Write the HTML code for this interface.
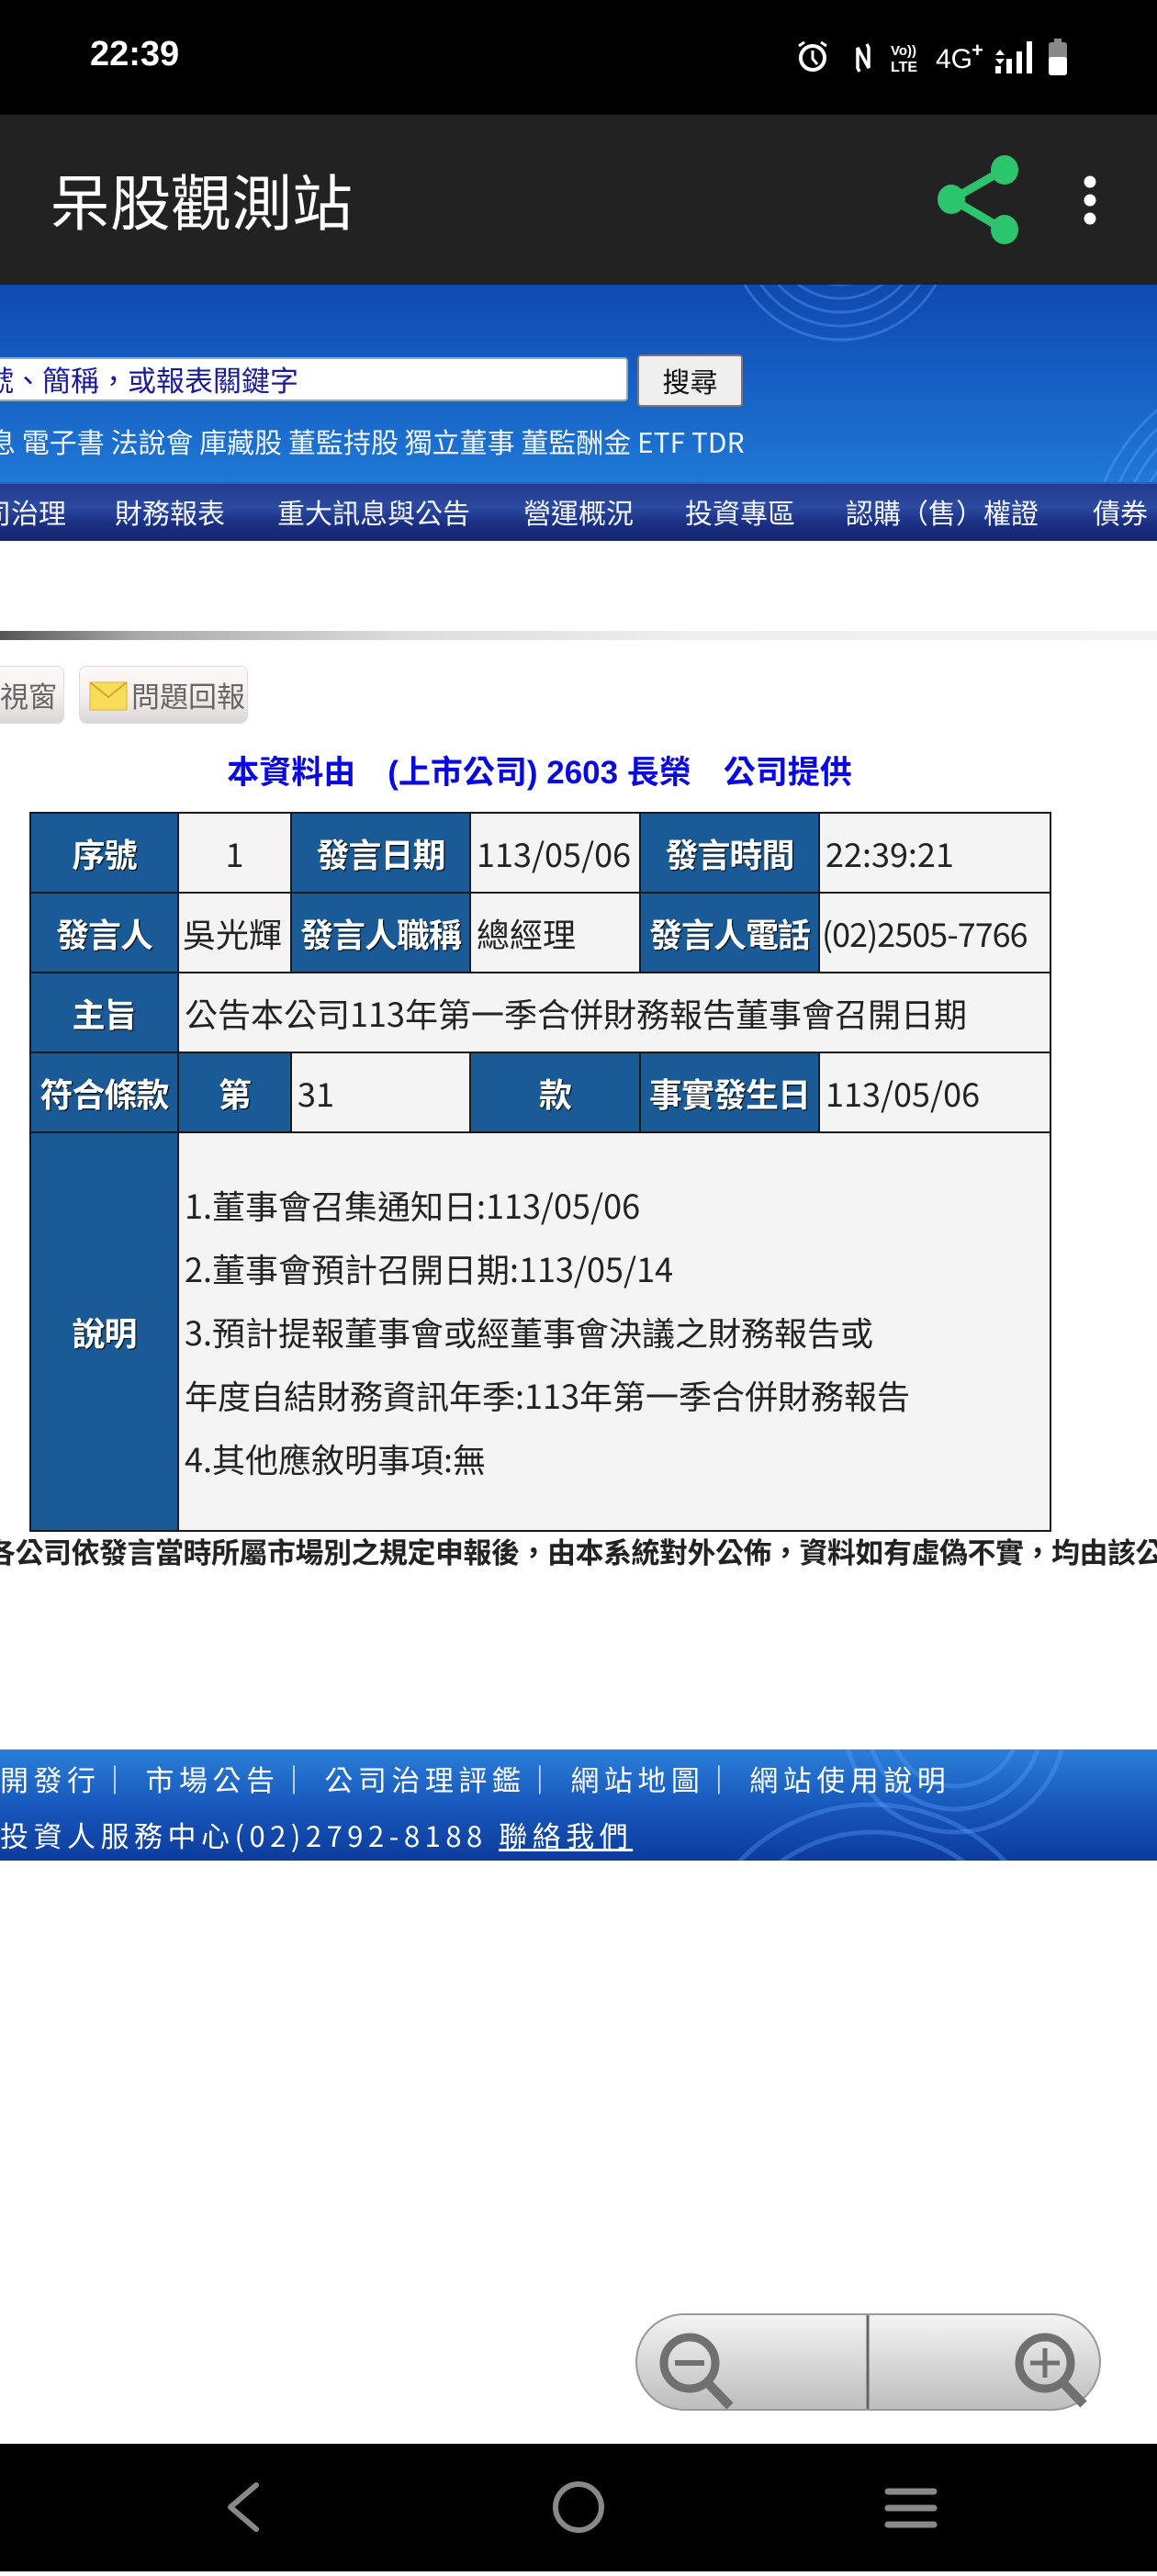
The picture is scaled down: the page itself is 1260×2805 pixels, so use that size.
<!DOCTYPE html>
<html><head><meta charset="utf-8">
<style>
*{margin:0;padding:0;box-sizing:border-box}
html,body{width:1260px;height:2800px;overflow:hidden;background:#fff;font-family:"Liberation Sans","Noto Sans CJK TC",sans-serif}
.abs{position:absolute;white-space:nowrap}
#status{position:absolute;left:0;top:0;width:1260px;height:125px;background:#000}
#appbar{position:absolute;left:0;top:125px;width:1260px;height:185px;background:#222}
#hdr{position:absolute;left:0;top:310px;width:1260px;height:215px;background:linear-gradient(180deg,#0f49b0 0%,#1660c4 50%,#1f78d6 100%);overflow:hidden}
#nav{position:absolute;left:0;top:525px;width:1260px;height:64px;background:linear-gradient(180deg,#233a8c 0%,#2b4aa0 40%,#1b2f82 70%,#15276e 100%);border-top:2px solid #3a5ab8;overflow:hidden}
#nav span{position:absolute;top:12px;color:#f2f4ff;font-size:30px;font-family:"Noto Sans CJK TC",sans-serif;line-height:36px;white-space:nowrap}
table{position:absolute;left:32px;top:884px;border-collapse:collapse;width:1111px;table-layout:fixed}
td{border:2px solid #1a1a1a;font-family:"Noto Sans CJK TC",sans-serif;font-size:36px;height:87px;padding:0 6px;white-space:nowrap;overflow:hidden}
td.h{background:#1a5a96;color:#fff;font-weight:bold;text-align:center;text-shadow:1px 1px 1px #000;padding:0;letter-spacing:-1px}
td.v{background:#f4f4f4;color:#222}
#foot{position:absolute;left:0;top:1905px;width:1260px;height:121px;background:linear-gradient(180deg,#2a7fd8 0%,#1858bd 50%,#0c3c9c 100%);overflow:hidden}
#foot div{position:absolute;color:#fff;font-size:31px;letter-spacing:5.5px;font-family:"Noto Sans CJK TC",sans-serif;white-space:nowrap;line-height:40px}
.btn{position:absolute;top:725px;height:63px;border:1px solid #ddd;border-radius:8px;background:linear-gradient(180deg,#fff8f8 0%,#f6efef 50%,#ddd6d6 100%);color:#666;font-size:31px;font-family:"Noto Sans CJK TC",sans-serif;line-height:61px;white-space:nowrap;overflow:hidden}
</style></head><body>
<div id="status">
  <div class="abs" style="left:98px;top:38px;color:#fff;font-size:38px;font-weight:bold;">22:39</div>
  <svg class="abs" style="left:860px;top:40px" width="310" height="48" viewBox="860 40 310 48">
    <circle cx="885" cy="63" r="13" fill="none" stroke="#fff" stroke-width="4"/>
    <path d="M885 55v9l5 6" fill="none" stroke="#fff" stroke-width="3"/>
    <path d="M870 50l6-4M900 50l-6-4" stroke="#fff" stroke-width="3"/>
    <path d="M936 78l-2-4v-22l12 22v-22l-2-4" fill="none" stroke="#fff" stroke-width="3.5"/>
    <text x="970" y="60" fill="#fff" font-size="15" font-weight="bold" font-family="Liberation Sans">Vo))</text>
    <text x="970" y="78" fill="#fff" font-size="16" font-weight="bold" font-family="Liberation Sans">LTE</text>
    <text x="1019" y="74" fill="#fff" font-size="30" font-family="Liberation Sans">4G</text>
    <text x="1058" y="62" fill="#fff" font-size="22" font-weight="bold" font-family="Liberation Sans">+</text>
    <path d="M1084 60l5-6 5 6zM1084 64l5 6 5-6z" fill="#fff"/>
    <rect x="1084" y="72" width="6" height="8" fill="#fff"/>
    <rect x="1096" y="64" width="6" height="16" fill="#fff"/>
    <rect x="1107" y="56" width="6" height="24" fill="#fff"/>
    <rect x="1118" y="45" width="6" height="35" fill="#fff"/>
    <rect x="1142" y="46" width="20" height="36" rx="3" fill="#888"/>
    <rect x="1148" y="42" width="8" height="5" fill="#888"/>
    <rect x="1142" y="62" width="20" height="20" rx="3" fill="#fff"/>
  </svg>
</div>
<div id="appbar">
  <div class="abs" style="left:54px;top:50px;color:#fff;font-size:66px;font-family:'Noto Sans CJK TC',sans-serif;line-height:84px">呆股觀測站</div>
  <svg class="abs" style="left:1000px;top:25px" width="260" height="140" viewBox="1000 150 260 140">
    <path d="M1093 185L1037 217L1093 250" fill="none" stroke="#2dc46e" stroke-width="9"/>
    <ellipse cx="1094" cy="185" rx="15" ry="16" fill="#2dc46e"/>
    <ellipse cx="1036" cy="217" rx="15" ry="16" fill="#2dc46e"/>
    <ellipse cx="1094" cy="250" rx="15" ry="16" fill="#2dc46e"/>
    <circle cx="1187" cy="198" r="6.5" fill="#fff"/>
    <circle cx="1187" cy="218" r="6.5" fill="#fff"/>
    <circle cx="1187" cy="238" r="6.5" fill="#fff"/>
  </svg>
</div>
<div id="hdr">
  <svg class="abs" style="left:0;top:0" width="1260" height="215">
    <g fill="none" stroke="#6aa8ff" stroke-opacity="0.35" stroke-width="3">
      <circle cx="915" cy="-60" r="60"/><circle cx="915" cy="-60" r="75"/><circle cx="915" cy="-60" r="90"/><circle cx="915" cy="-60" r="105"/><circle cx="915" cy="-60" r="120"/>
      <circle cx="1400" cy="300" r="170"/><circle cx="1400" cy="300" r="185"/><circle cx="1400" cy="300" r="200"/><circle cx="1400" cy="300" r="215"/>
    </g>
  </svg>
  <div class="abs" style="left:0;top:79px;width:684px;height:48px;background:#fff;border:2px solid #9aa;border-left:none;border-radius:0 4px 4px 0;overflow:hidden">
    <div class="abs" style="left:-16px;top:2px;color:#1a1a9a;font-size:31px;font-family:'Noto Sans CJK TC',sans-serif;line-height:40px">號、簡稱，或報表關鍵字</div>
  </div>
  <div class="abs" style="left:694px;top:76px;width:115px;height:57px;background:#efefef;border:2px solid #778;border-radius:4px;text-align:center;font-size:30px;line-height:52px;font-family:'Noto Sans CJK TC',sans-serif;color:#111">搜尋</div>
  <div class="abs" style="left:-13px;top:152px;color:#f0f4ff;font-size:30px;font-family:'Noto Sans CJK TC',sans-serif;line-height:36px">息 電子書 法說會 庫藏股 董監持股 獨立董事 董監酬金 ETF TDR</div>
</div>
<div id="nav">
  <span style="left:-18px">司治理</span>
  <span style="left:125px">財務報表</span>
  <span style="left:302px">重大訊息與公告</span>
  <span style="left:570px">營運概況</span>
  <span style="left:746px">投資專區</span>
  <span style="left:921px">認購（售）權證</span>
  <span style="left:1190px">債券</span>
</div>
<div class="abs" style="left:0;top:687px;width:1260px;height:10px;background:linear-gradient(90deg,#555 0%,#aaa 12%,#ddd 35%,#eee 60%,#f2f2f2 100%)"></div>
<div class="btn" style="left:-10px;width:80px"><span style="position:absolute;left:-22px">新視窗</span></div>
<div class="btn" style="left:86px;width:184px">
  <svg style="position:absolute;left:10px;top:16px" width="42" height="32"><rect x="1" y="1" width="40" height="30" fill="#f8dc5a" stroke="#e0b030"/><path d="M1 1l20 16 20-16" fill="none" stroke="#d8a828" stroke-width="2"/></svg>
  <span style="position:absolute;left:56px">問題回報</span>
</div>
<div class="abs" style="left:32px;width:1111px;top:818px;text-align:center;color:#0a0ae0;font-weight:bold;font-size:35px;font-family:'Liberation Sans','Noto Sans CJK TC',sans-serif;line-height:48px">本資料由　(上市公司) 2603 長榮　公司提供</div>
<table>
<colgroup><col style="width:161px"><col style="width:123px"><col style="width:195px"><col style="width:185px"><col style="width:195px"><col style="width:252px"></colgroup>
<tr><td class="h">序號</td><td class="v" style="text-align:center">1</td><td class="h">發言日期</td><td class="v">113/05/06</td><td class="h">發言時間</td><td class="v">22:39:21</td></tr>
<tr><td class="h">發言人</td><td class="v" style="padding:0 4px">吳光輝</td><td class="h">發言人職稱</td><td class="v">總經理</td><td class="h">發言人電話</td><td class="v" style="padding:0 2px;letter-spacing:-1px">(02)2505-7766</td></tr>
<tr><td class="h">主旨</td><td class="v" colspan="5">公告本公司113年第一季合併財務報告董事會召開日期</td></tr>
<tr><td class="h">符合條款</td><td class="h">第</td><td class="v">31</td><td class="h">款</td><td class="h">事實發生日</td><td class="v">113/05/06</td></tr>
<tr><td class="h" style="height:434px">說明</td><td class="v" colspan="5" style="line-height:69px;vertical-align:middle">1.董事會召集通知日:113/05/06<br>2.董事會預計召開日期:113/05/14<br>3.預計提報董事會或經董事會決議之財務報告或<br>年度自結財務資訊年季:113年第一季合併財務報告<br>4.其他應敘明事項:無</td></tr>
</table>
<div class="abs" style="left:0;top:1668px;width:1260px;height:44px;overflow:hidden">
<div class="abs" style="left:-14px;top:0;color:#222;font-weight:bold;font-size:31px;font-family:'Noto Sans CJK TC',sans-serif;line-height:42px;letter-spacing:-0.5px">各公司依發言當時所屬市場別之規定申報後，由本系統對外公佈，資料如有虛偽不實，均由該公司負責。</div>
</div>
<div id="foot">
  <svg class="abs" style="left:0;top:0" width="1260" height="121">
    <g fill="none" stroke="#5ea2ff" stroke-opacity="0.35" stroke-width="5">
      <circle cx="1040" cy="-30" r="70"/><circle cx="1040" cy="-30" r="95"/><circle cx="1040" cy="-30" r="120"/>
      <circle cx="950" cy="260" r="170"/><circle cx="950" cy="260" r="200"/>
    </g>
  </svg>
  <div style="left:0;top:12px">開發行｜ 市場公告｜ 公司治理評鑑｜ 網站地圖｜ 網站使用說明</div>
  <div style="left:0;top:73px">投資人服務中心(02)2792-8188 <u>聯絡我們</u></div>
</div>
<svg class="abs" style="left:690px;top:2516px" width="512" height="112" viewBox="690 2516 512 112">
  <defs><linearGradient id="zg" x1="0" y1="0" x2="0" y2="1"><stop offset="0" stop-color="#f4f4f4"/><stop offset="1" stop-color="#bdbdbd"/></linearGradient></defs>
  <rect x="693" y="2520" width="505" height="104" rx="52" fill="url(#zg)" stroke="#999" stroke-width="2"/>
  <line x1="945" y1="2521" x2="945" y2="2623" stroke="#666" stroke-width="3"/>
  <circle cx="751" cy="2573" r="28" fill="none" stroke="#707070" stroke-width="9"/>
  <line x1="735" y1="2573" x2="767" y2="2573" stroke="#707070" stroke-width="6"/>
  <line x1="770" y1="2594" x2="795" y2="2620" stroke="#707070" stroke-width="10"/>
  <circle cx="1138" cy="2573" r="28" fill="none" stroke="#707070" stroke-width="9"/>
  <line x1="1122" y1="2573" x2="1154" y2="2573" stroke="#707070" stroke-width="5"/>
  <line x1="1138" y1="2557" x2="1138" y2="2589" stroke="#707070" stroke-width="5"/>
  <line x1="1157" y1="2594" x2="1180" y2="2618" stroke="#707070" stroke-width="10"/>
</svg>
<div class="abs" style="left:0;top:2661px;width:1260px;height:139px;background:#000">
  <svg width="1260" height="139" viewBox="0 2661 1260 139">
    <path d="M279 2706L251 2730L279 2754" fill="none" stroke="#888" stroke-width="6" stroke-linecap="round" stroke-linejoin="round"/>
    <circle cx="630" cy="2730" r="25" fill="none" stroke="#888" stroke-width="6"/>
    <g stroke="#888" stroke-width="7" stroke-linecap="round"><line x1="967" y1="2713" x2="1017" y2="2713"/><line x1="967" y1="2731" x2="1017" y2="2731"/><line x1="967" y1="2749" x2="1017" y2="2749"/></g>
  </svg>
</div>
</body></html>
